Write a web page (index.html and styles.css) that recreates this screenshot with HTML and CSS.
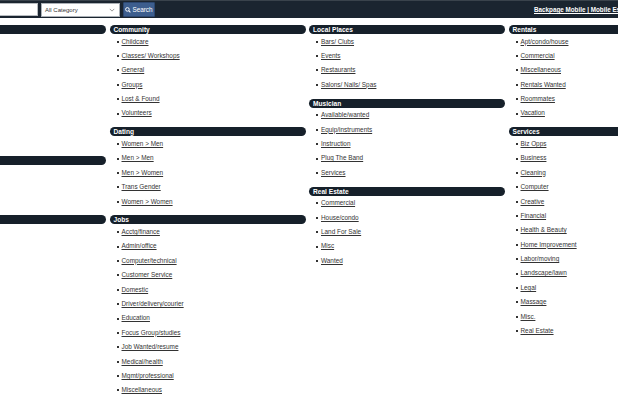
FILE: index.html
```html
<!DOCTYPE html>
<html>
<head>
<meta charset="utf-8">
<link rel="stylesheet" href="styles.css">
</head>
<body>
<div class="page">
  <div class="topbar">
    <div class="searchbox"></div>
    <div class="select"><span>All Category</span><svg class="chev" viewBox="0 0 8 5" width="6" height="4"><path d="M1 1 L4 4 L7 1" fill="none" stroke="#777" stroke-width="1"/></svg></div>
    <div class="btn"><svg viewBox="0 0 10 10" width="6" height="6"><circle cx="4" cy="4" r="3" fill="none" stroke="#fff" stroke-width="1.6"/><path d="M6.2 6.2 L9 9" stroke="#fff" stroke-width="1.8"/></svg><span>Search</span></div>
    <a class="mobile" href="#">Backpage Mobile | Mobile Es</a>
  </div>
  <div class="cols">
    <div class="col">
      <div class="sec"><div class="hd"></div><ul class="blank">
        <li></li><li></li><li></li><li></li><li></li><li></li><li></li><li></li></ul></div>
      <div class="sec"><div class="hd"></div><ul class="blank">
        <li></li><li></li><li></li></ul></div>
      <div class="sec"><div class="hd"></div><ul class="blank">
        <li></li><li></li><li></li><li></li><li></li><li></li><li></li><li></li><li></li><li></li><li></li><li></li></ul></div>
    </div>
    <div class="col">
      <div class="sec"><div class="hd">Community</div><ul>
        <li><a href="#">Childcare</a></li><li><a href="#">Classes/ Workshops</a></li><li><a href="#">General</a></li><li><a href="#">Groups</a></li><li><a href="#">Lost &amp; Found</a></li><li><a href="#">Volunteers</a></li></ul></div>
      <div class="sec"><div class="hd">Dating</div><ul>
        <li><a href="#">Women &gt; Men</a></li><li><a href="#">Men &gt; Men</a></li><li><a href="#">Men &gt; Women</a></li><li><a href="#">Trans Gender</a></li><li><a href="#">Women &gt; Women</a></li></ul></div>
      <div class="sec"><div class="hd">Jobs</div><ul>
        <li><a href="#">Acctg/finance</a></li><li><a href="#">Admin/office</a></li><li><a href="#">Computer/technical</a></li><li><a href="#">Customer Service</a></li><li><a href="#">Domestic</a></li><li><a href="#">Driver/delivery/courier</a></li><li><a href="#">Education</a></li><li><a href="#">Focus Group/studies</a></li><li><a href="#">Job Wanted/resume</a></li><li><a href="#">Medical/health</a></li><li><a href="#">Mgmt/professional</a></li><li><a href="#">Miscellaneous</a></li></ul></div>
    </div>
    <div class="col">
      <div class="sec"><div class="hd">Local Places</div><ul>
        <li><a href="#">Bars/ Clubs</a></li><li><a href="#">Events</a></li><li><a href="#">Restaurants</a></li><li><a href="#">Salons/ Nails/ Spas</a></li></ul></div>
      <div class="sec"><div class="hd">Musician</div><ul>
        <li><a href="#">Available/wanted</a></li><li><a href="#">Equip/instruments</a></li><li><a href="#">Instruction</a></li><li><a href="#">Plug The Band</a></li><li><a href="#">Services</a></li></ul></div>
      <div class="sec"><div class="hd">Real Estate</div><ul>
        <li><a href="#">Commercial</a></li><li><a href="#">House/condo</a></li><li><a href="#">Land For Sale</a></li><li><a href="#">Misc</a></li><li><a href="#">Wanted</a></li></ul></div>
    </div>
    <div class="col">
      <div class="sec"><div class="hd">Rentals</div><ul>
        <li><a href="#">Apt/condo/house</a></li><li><a href="#">Commercial</a></li><li><a href="#">Miscellaneous</a></li><li><a href="#">Rentals Wanted</a></li><li><a href="#">Roommates</a></li><li><a href="#">Vacation</a></li></ul></div>
      <div class="sec"><div class="hd">Services</div><ul>
        <li><a href="#">Biz Opps</a></li><li><a href="#">Business</a></li><li><a href="#">Cleaning</a></li><li><a href="#">Computer</a></li><li><a href="#">Creative</a></li><li><a href="#">Financial</a></li><li><a href="#">Health &amp; Beauty</a></li><li><a href="#">Home Improvement</a></li><li><a href="#">Labor/moving</a></li><li><a href="#">Landscape/lawn</a></li><li><a href="#">Legal</a></li><li><a href="#">Massage</a></li><li><a href="#">Misc.</a></li><li><a href="#">Real Estate</a></li></ul></div>
    </div>
  </div>
</div>
</body>
</html>
```

FILE: styles.css
```css
html, body {
  margin: 0;
  padding: 0;
  overflow: hidden;
  background: #fff;
  font-family: "Liberation Sans", Arial, sans-serif;
}
.page {
  width: 900px;
  margin-left: -90px;
}
.topbar {
  height: 18px;
  background: #1b2530;
  border-top: 1px solid #3a434c;
  box-sizing: border-box;
  display: flex;
  align-items: center;
}
.searchbox {
  width: 120px;
  height: 13px;
  margin-left: 8px;
  background: #fff;
  border: 1px solid #b8bcc0;
  box-sizing: border-box;
}
.select {
  width: 79px;
  height: 14px;
  margin-left: 3px;
  background: #fff;
  border: 1px solid #aab0b6;
  box-sizing: border-box;
  display: flex;
  align-items: center;
  justify-content: space-between;
  padding: 0 4px 0 3px;
  font-size: 6px;
  color: #333;
}
.chev { display: block; }
.btn {
  width: 32px;
  height: 15px;
  margin-left: 3px;
  background: #3d5e8e;
  border: 1px solid #2c4770;
  box-sizing: border-box;
  border-radius: 1px;
  display: flex;
  align-items: center;
  justify-content: center;
  gap: 1px;
  color: #fff;
  font-size: 6.4px;
}
.btn svg { display: block; }
.mobile {
  margin-left: 379px;
  white-space: nowrap;
  color: #fff;
  font-weight: bold;
  font-size: 6.3px;
  text-decoration: underline;
}
.cols {
  display: flex;
  gap: 3.5px;
  padding-top: 7px;
}
.col {
  width: 196px;
  flex-shrink: 0;
}
.sec {
  margin-bottom: 6.6px;
}
.hd {
  height: 9px;
  line-height: 9px;
  background: #16202a;
  border-radius: 5px;
  color: #fff;
  font-weight: bold;
  font-size: 6.6px;
  padding-left: 4px;
}
ul {
  list-style: none;
  margin: 0;
  padding: 0.5px 0 0 7px;
}
li {
  height: 14.4px;
  line-height: 14.4px;
  font-size: 6.4px;
  display: flex;
  align-items: center;
}
li::before {
  content: "";
  width: 2px;
  height: 2px;
  background: #333;
  margin-right: 3px;
  flex-shrink: 0;
}
.blank li::before {
  display: none;
}
li a {
  color: #333;
  text-decoration: underline;
}
```
